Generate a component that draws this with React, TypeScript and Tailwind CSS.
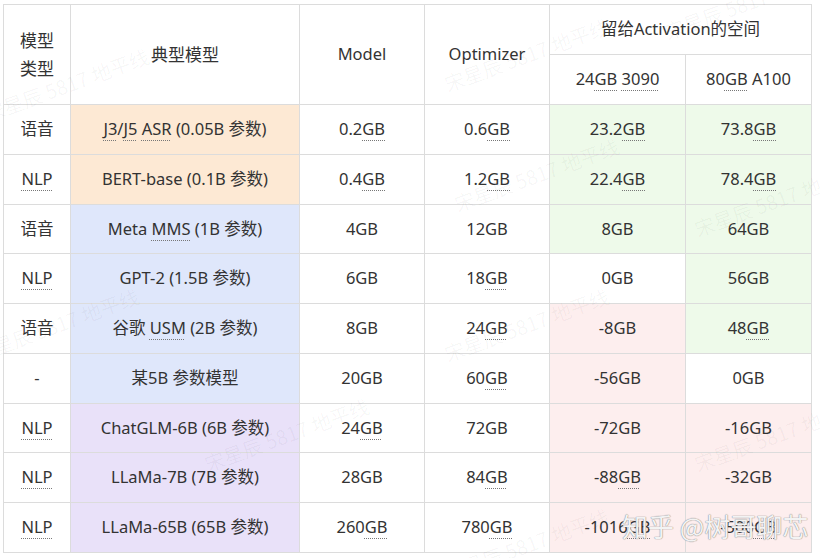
import React from "react";

type Cell = { text: React.ReactNode; bg?: string };

const ORANGE = "bg-[#fde9d4]";
const BLUE = "bg-[#dfe7fb]";
const PURPLE = "bg-[#e9e1f9]";
const GREEN = "bg-[#eefaea]";
const RED = "bg-[#fdeeee]";

// dotted underline used by the source page for glossary terms
function U({ children }: { children: React.ReactNode }) {
  return (
    <span className="underline decoration-dotted decoration-[#777] decoration-1 underline-offset-[5px]">
      {children}
    </span>
  );
}

const rows: { type: React.ReactNode; name: React.ReactNode; nameBg: string; cells: Cell[] }[] = [
  {
    type: "语音",
    name: (
      <>
        <U>J3</U>/<U>J5</U> <U>ASR</U> (0.05B 参数)
      </>
    ),
    nameBg: ORANGE,
    cells: [
      { text: <>0.2<U>GB</U></> },
      { text: <>0.6<U>GB</U></> },
      { text: <>23.2<U>GB</U></>, bg: GREEN },
      { text: <>73.8<U>GB</U></>, bg: GREEN },
    ],
  },
  {
    type: <U>NLP</U>,
    name: "BERT-base (0.1B 参数)",
    nameBg: ORANGE,
    cells: [
      { text: <>0.4<U>GB</U></> },
      { text: <>1.2<U>GB</U></> },
      { text: <>22.4<U>GB</U></>, bg: GREEN },
      { text: <>78.4<U>GB</U></>, bg: GREEN },
    ],
  },
  {
    type: "语音",
    name: (
      <>
        Meta <U>MMS</U> (1B 参数)
      </>
    ),
    nameBg: BLUE,
    cells: [
      { text: "4GB" },
      { text: "12GB" },
      { text: "8GB", bg: GREEN },
      { text: "64GB", bg: GREEN },
    ],
  },
  {
    type: <U>NLP</U>,
    name: "GPT-2 (1.5B 参数)",
    nameBg: BLUE,
    cells: [
      { text: "6GB" },
      { text: <>18<U>GB</U></> },
      { text: "0GB" },
      { text: "56GB", bg: GREEN },
    ],
  },
  {
    type: "语音",
    name: (
      <>
        谷歌 <U>USM</U> (2B 参数)
      </>
    ),
    nameBg: BLUE,
    cells: [
      { text: "8GB" },
      { text: <>24<U>GB</U></> },
      { text: "-8GB", bg: RED },
      { text: <>48<U>GB</U></>, bg: GREEN },
    ],
  },
  {
    type: "-",
    name: "某5B 参数模型",
    nameBg: BLUE,
    cells: [
      { text: "20GB" },
      { text: <>60<U>GB</U></> },
      { text: "-56GB", bg: RED },
      { text: "0GB" },
    ],
  },
  {
    type: <U>NLP</U>,
    name: "ChatGLM-6B (6B 参数)",
    nameBg: PURPLE,
    cells: [
      { text: <>24<U>GB</U></> },
      { text: "72GB" },
      { text: "-72GB", bg: RED },
      { text: "-16GB", bg: RED },
    ],
  },
  {
    type: <U>NLP</U>,
    name: "LLaMa-7B (7B 参数)",
    nameBg: PURPLE,
    cells: [
      { text: "28GB" },
      { text: <>84<U>GB</U></> },
      { text: <>-88<U>GB</U></>, bg: RED },
      { text: "-32GB", bg: RED },
    ],
  },
  {
    type: <U>NLP</U>,
    name: "LLaMa-65B (65B 参数)",
    nameBg: PURPLE,
    cells: [
      { text: <>260<U>GB</U></> },
      { text: <>780<U>GB</U></> },
      { text: <>-1016<U>GB</U></>, bg: RED },
      { text: <>-500<U>GB</U></>, bg: RED },
    ],
  },
];

const marks = [
  { x: -20, y: 70 },
  { x: 440, y: 40 },
  { x: 660, y: -12 },
  { x: 450, y: 160 },
  { x: 690, y: 185 },
  { x: -30, y: 310 },
  { x: 440, y: 310 },
  { x: 200, y: 420 },
  { x: 690, y: 420 },
  { x: 440, y: 530 },
];

export default function App() {
  const td = "border border-[#dcdcdc] text-center align-middle px-1";
  return (
    <div
      className="relative w-[820px] h-[558px] overflow-hidden bg-white text-[#333] text-[16.5px]"
      style={{ fontFamily: '"Noto Sans", "Noto Sans CJK SC", sans-serif' }}
    >
      <div className="pt-[4px] pl-[3px]">
        <table className="table-fixed border-collapse w-[808px]">
          <colgroup>
            <col className="w-[67px]" />
            <col className="w-[229px]" />
            <col className="w-[125px]" />
            <col className="w-[125px]" />
            <col className="w-[136px]" />
            <col className="w-[126px]" />
          </colgroup>
          <thead>
            <tr className="h-[50px]">
              <td rowSpan={2} className={`${td} leading-[28px] text-[17px]`}>
                模型
                <br />
                类型
              </td>
              <td rowSpan={2} className={`${td} text-[17px]`}>典型模型</td>
              <td rowSpan={2} className={td}>Model</td>
              <td rowSpan={2} className={td}>Optimizer</td>
              <td colSpan={2} className={td}>留给Activation的空间</td>
            </tr>
            <tr className="h-[50px]">
              <td className={td}>
                24<U>GB</U> <U>3090</U>
              </td>
              <td className={td}>
                80<U>GB</U> A100
              </td>
            </tr>
          </thead>
          <tbody>
            {rows.map((r, i) => (
              <tr key={i} className="h-[49.75px]">
                <td className={td}>{r.type}</td>
                <td className={`${td} ${r.nameBg}`}>{r.name}</td>
                {r.cells.map((c, j) => (
                  <td key={j} className={`${td} ${c.bg ?? ""}`}>
                    {c.text}
                  </td>
                ))}
              </tr>
            ))}
          </tbody>
        </table>
      </div>

      {/* faint repeated author watermark */}
      {marks.map((m, i) => (
        <div
          key={i}
          className="pointer-events-none absolute whitespace-nowrap text-[20px] text-black/[0.04] -rotate-[20deg]"
          style={{ left: m.x, top: m.y, fontFamily: '"Noto Sans CJK SC", sans-serif' }}
        >
          宋星辰 5817 地平线
        </div>
      ))}

      {/* zhihu watermark */}
      <div
        className="pointer-events-none absolute left-[622px] top-[506px] whitespace-nowrap text-[26px] text-white/90"
        style={{ textShadow: "0 0 1px #888, 0 0 1px #888", fontFamily: '"Noto Sans CJK SC", sans-serif' }}
      >
        知乎 @树哥聊芯
      </div>
    </div>
  );
}
